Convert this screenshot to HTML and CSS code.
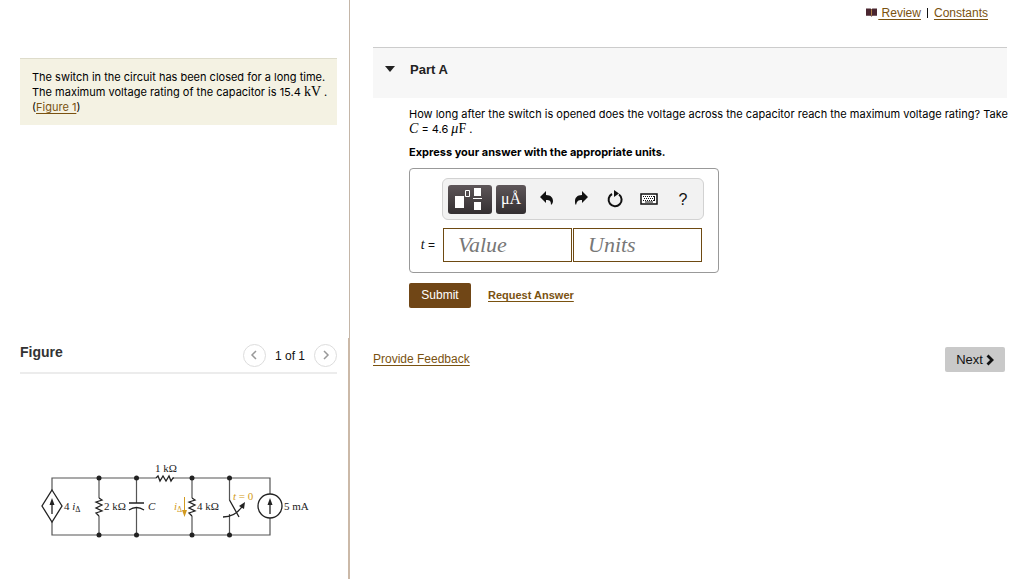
FILE: index.html
```html
<!DOCTYPE html>
<html lang="en">
<head>
<meta charset="utf-8">
<meta name="viewport" content="width=device-width, initial-scale=1">
<title>Part A</title>
<link rel="stylesheet" href="styles.css">
</head>
<body>
<div class="page">
  <aside class="side">
    <section class="intro">
      <p class="problem">The switch in the circuit has been closed for a long time.<br>The maximum voltage rating of the capacitor is 15.4 <span class="math">kV</span> .<br>(<a href="#figure">Figure 1</a>)</p>
    </section>
    <section class="figure" id="figure">
      <header class="figure-head">
        <h2 class="figure-title">Figure</h2>
        <nav class="pager" aria-label="Figures">
          <button class="round" type="button" aria-label="Previous figure"><svg width="8" height="10" viewBox="0 0 8 10"><path d="M6 1 2 5l4 4"/></svg></button>
          <span class="count">1 of 1</span>
          <button class="round" type="button" aria-label="Next figure"><svg width="8" height="10" viewBox="0 0 8 10"><path d="M2 1l4 4-4 4"/></svg></button>
        </nav>
      </header>
      <svg class="circuit" width="290" height="90" viewBox="0 0 290 90" role="img" aria-label="Circuit diagram">
        <g class="wire">
          <path d="M22 35V23H126M144 23H240V39M22 67V80H240V63"/>
          <path d="M69 23V43M69 61V80M106.500 23V48M106.500 53V80M162 23V43M162 61V80M199.500 23V45M199.500 59V80"/>
        </g>
        <g class="part">
          <path d="M22 35 32 51 22 67 12 51Z"/>
          <path d="M69 43l3 2-6 2 6 3-6 3 6 3-6 2 3 3"/>
          <path d="M162 43l3 2-6 2 6 3-6 3 6 3-6 2 3 3"/>
          <path d="M126 23l2-2 2 5 3-5 3 5 3-5 2 5 2-3h1"/>
          <path d="M99 48H114M99 55Q106.500 50 114 55"/>
          <path d="M199.500 45 209 62M193 62Q206 62 213 50"/>
          <circle cx="240" cy="51" r="12"/>
          <path d="M22 59V48M240 59V48"/>
        </g>
        <g class="solid">
          <circle cx="69" cy="23" r="2.500"/><circle cx="106.500" cy="23" r="2.500"/><circle cx="162" cy="23" r="2.500"/><circle cx="199.500" cy="23" r="2.500"/>
          <circle cx="69" cy="80" r="2.500"/><circle cx="106.500" cy="80" r="2.500"/><circle cx="162" cy="80" r="2.500"/><circle cx="199.500" cy="80" r="2.500"/>
          <path d="M22 43l2.500 7h-5ZM240 43l2.500 7h-5ZM215 47l-1 7-5-3Z"/>
        </g>
        <path class="gold-line" d="M154.500 42V56"/>
        <path class="gold" d="M152 55h5l-2.500 7Z"/>
        <text x="125" y="17">1 kΩ</text>
        <text x="34" y="55">4 <tspan class="it">i</tspan><tspan class="sub" dy="2">Δ</tspan></text>
        <text x="74" y="55">2 kΩ</text>
        <text class="it" x="118" y="55">C</text>
        <text class="gold it" x="144" y="55">i<tspan class="sub" dy="2">Δ</tspan></text>
        <text x="167" y="55">4 kΩ</text>
        <text class="gold" x="203" y="45"><tspan class="it">t</tspan> = 0</text>
        <text x="254" y="55">5 mA</text>
      </svg>
    </section>
  </aside>

  <main class="main">
    <nav class="top-links">
      <a href="#review"><svg class="book" width="11" height="9" viewBox="0 0 12 9"><path class="cover" d="M0 0h5l1 1 1-1h5v8H7L6 9 5 8H0Z"/><path class="spine" d="M6 1v7"/></svg> Review</a>
      <span class="bar"></span>
      <a href="#constants">Constants</a>
    </nav>
    <header class="part-head">
      <svg width="10" height="6" viewBox="0 0 10 6"><path d="M0 0h10L5 6Z" fill="#222"/></svg>
      <h1 class="part-title">Part A</h1>
    </header>
    <form class="question">
      <p class="prompt">How long after the switch is opened does the voltage across the capacitor reach the maximum voltage rating? Take<br><span class="math it">C</span> = 4.6 <span class="math"><i>μ</i>F</span> .</p>
      <p class="express">Express your answer with the appropriate units.</p>
      <div class="answer">
        <div class="tools">
          <button class="dark wide" type="button" aria-label="Templates"><svg width="44" height="29" viewBox="0 0 44 29"><path fill="#fff" d="M7 11h9v12H7ZM26 3h7v8h-7ZM25 13h9v1h-9ZM26 17h7v8h-7Z"/><path fill="none" stroke="#fff" d="M17.500 5.500h4v6h-4Z"/></svg></button>
          <button class="dark units" type="button">μÅ</button>
          <button class="tool" type="button" aria-label="Undo"><svg width="14" height="16" viewBox="0 0 14 16"><path d="M6 0v4c5 0 7 3 7 6 0 2-1 3-2 4 0-4-1-5-5-5v3L0 6Z"/></svg></button>
          <button class="tool" type="button" aria-label="Redo"><svg width="14" height="16" viewBox="0 0 14 16"><path d="M8 0v4C3 4 1 7 1 10c0 2 0 3 1 4 1-4 2-5 6-5v3l6-6Z"/></svg></button>
          <button class="tool" type="button" aria-label="Reset"><svg width="16" height="18" viewBox="0 0 16 18"><path d="M12 4.500A6.500 6.500 0 1 1 5 4" fill="none" stroke="#111" stroke-width="2"/><path d="M7 0l5 3.500L7 7Z"/></svg></button>
          <button class="tool" type="button" aria-label="Keyboard shortcuts"><svg width="18" height="12" viewBox="0 0 18 12"><path d="M1 1h16v10H1Z" fill="#fff" stroke="#111" stroke-width="1.500"/><path d="M3 3.500h12M4 5.500h11M3 7.500h12" fill="none" stroke="#111" stroke-dasharray="1 1"/><path d="M5 8.500h8v1H5ZM14 3h1v5h-1Z"/></svg></button>
          <button class="tool help" type="button" aria-label="Help">?</button>
        </div>
        <label class="var" for="value"><span class="math it">t</span> =</label>
        <div class="fields">
          <input class="field" id="value" type="text" placeholder="Value">
          <input class="field" type="text" placeholder="Units" aria-label="Units">
        </div>
      </div>
      <div class="actions">
        <button class="submit" type="submit">Submit</button>
        <a class="request" href="#answer">Request Answer</a>
      </div>
    </form>
    <footer class="foot">
      <a href="#feedback">Provide Feedback</a>
      <button class="next" type="button">Next <svg width="8" height="12" viewBox="0 0 8 12"><path d="M1.500 1.500 6 6l-4.500 4.500" fill="none" stroke="#111" stroke-width="2.800"/></svg></button>
    </footer>
  </main>
</div>
</body>
</html>
```

FILE: styles.css
```css
* { box-sizing: border-box; }
body { margin: 0; background: #fff; color: #111; font: 12px/15px "Liberation Sans", Arial, sans-serif; }
h1, h2, p { margin: 0; }
button { border: 0; padding: 0; font: inherit; color: inherit; cursor: pointer; }
a { color: #7a5210; text-underline-offset: 2px; }
.math { font-family: "Liberation Serif", serif; font-size: 14px; line-height: 0; }
.it { font-style: italic; }

.page { display: grid; grid-template-columns: 350px 1fr; min-height: 100vh; }
.side { display: grid; grid-template-rows: 338px 1fr; }
.intro { padding: 58px 12px 0 20px; border-right: 1px solid #c4b6a8; }
.problem, .prompt, .express { font-family: Inter, "Liberation Sans", sans-serif; font-size: 11px; color: #000; }
.problem { padding: 11px 8px 10px 12px; background: #f4f2e3; border-top: 1px solid #dedccb; }
.figure { padding: 0 11px 0 20px; border-right: 2px solid #cbb9a8; }
.figure-head { display: flex; justify-content: space-between; height: 36px; border-bottom: 2px solid #ececec; }
.figure-title { padding-top: 6px; font-size: 14px; line-height: 17px; color: #333; }
.pager { display: flex; align-items: center; gap: 9px; }
.round { display: grid; place-items: center; width: 23px; height: 23px; border: 1px solid #ddd; border-radius: 50%; background: #fff; }
.round path { fill: none; stroke: #999; stroke-width: 1.5; }
.count { padding-top: 3px; }
.circuit { display: block; margin: 81px 0 0 10px; font: 11px "Liberation Serif", serif; fill: #222; }
.wire { fill: none; stroke: #555; stroke-width: 1.2; }
.part { fill: none; stroke: #222; stroke-width: 1.3; }
.solid { fill: #222; }
.gold { fill: #d29a20; }
.gold-line { stroke: #d29a20; }
.sub { font-size: 8px; font-style: normal; }

.main { padding: 0 17px 0 23px; }
.top-links { display: flex; justify-content: flex-end; align-items: center; gap: 6px; height: 47px; padding: 0 19px 21px 0; }
.book { margin-right: 1px; }
.cover { fill: #4a2630; }
.spine { stroke: #b98a4a; }
.bar { width: 1px; height: 10px; background: #111; }
.part-head { display: flex; align-items: center; gap: 15px; height: 51px; padding: 0 12px 8px; background: #f7f7f7; border-top: 1px solid #ccc; }
.part-title { font-size: 13px; line-height: 15px; color: #222; }
.question { padding: 9px 0 0 36px; }
.prompt { margin-right: -12px; }
.express { margin-top: 8px; font-weight: bold; }
.answer { display: grid; grid-template-columns: 32px 262px; align-items: center; row-gap: 8px; width: 310px; margin-top: 8px; padding: 9px 6px 10px 0; border: 1px solid #999; border-radius: 4px; }
.tools { grid-column: 2; display: flex; align-items: center; height: 42px; padding-left: 5px; background: #f2f2f2; border: 1px solid #d2d2d2; border-radius: 6px; }
.dark { display: grid; place-items: center; height: 29px; margin-right: 4px; border-radius: 3px; background: linear-gradient(#5e5659, #332f31); color: #fff; }
.wide { width: 44px; }
.units { width: 30px; font: 16px "Liberation Serif", serif; }
.tool { display: grid; place-items: center; width: 34px; height: 29px; background: none; fill: #111; }
.help { font-size: 16px; }
.var { justify-self: end; padding-right: 7px; white-space: nowrap; }
.fields { display: grid; grid-template-columns: 1fr 1fr; gap: 1px; padding: 0 2px 0 1px; }
.field { width: 100%; height: 34px; border: 1px solid #6e4a12; padding: 0 14px; background: #fff; font: italic 22px "Liberation Serif", serif; }
.field::placeholder { color: #777; opacity: 1; }
.actions { display: flex; align-items: center; gap: 17px; margin-top: 10px; }
.submit { width: 62px; height: 25px; border-radius: 2px; background: #704616; color: #fff; }
.request { font-size: 11px; font-weight: bold; }
.foot { display: flex; align-items: center; justify-content: space-between; margin-top: 39px; padding-right: 2px; }
.next { display: flex; align-items: center; justify-content: center; gap: 3px; width: 60px; height: 25px; border-radius: 2px; background: #c9c9c9; font-size: 13px; }
```
